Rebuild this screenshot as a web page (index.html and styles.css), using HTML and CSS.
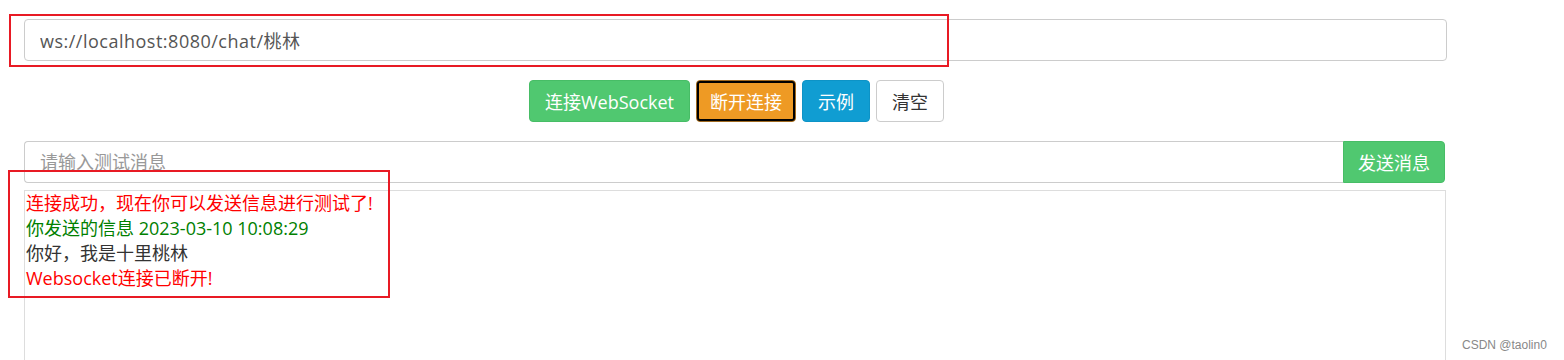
FILE: index.html
```html
<!DOCTYPE html>
<html lang="zh-CN">
<head>
  <meta charset="UTF-8" />
  <title>WebSocket 测试</title>
  <link rel="stylesheet" href="styles.css">
</head>
<body>

<div class="page">
  <div class="url-row">
    <input type="text" class="form-input url-input" id="wsUrl" value="ws://localhost:8080/chat/桃林" />
  </div>

  <div class="btn-row">
    <button class="btn btn-green">连接WebSocket</button>
    <button class="btn btn-orange">断开连接</button>
    <button class="btn btn-blue">示例</button>
    <button class="btn btn-white">清空</button>
  </div>

  <div class="send-row">
    <input type="text" class="form-input send-input" placeholder="请输入测试消息" />
    <button class="btn btn-green send-btn">发送消息</button>
  </div>

  <div class="messages">
    <div class="msg red">连接成功，现在你可以发送信息进行测试了!</div>
    <div class="msg green">你发送的信息 2023-03-10 10:08:29</div>
    <div class="msg">你好，我是十里桃林</div>
    <div class="msg red">Websocket连接已断开!</div>
  </div>
</div>

<div class="mark mark-url"></div>
<div class="mark mark-msg"></div>
<div class="watermark">CSDN @taolin0</div>

</body>
</html>
```

FILE: styles.css
```css
body { margin: 0; padding: 0; background: #fff; font-family: "Open Sans", "Noto Sans CJK SC", sans-serif; color: #333; overflow: hidden; }
.page { width: 1423px; margin-left: 24px; padding-top: 19px; }
.form-input { box-sizing: border-box; width: 100%; height: 42px; padding: 0 15px; border: 1px solid #ccc; border-radius: 4px;
              font-family: inherit; font-size: 18px; color: #555; background: #fff; outline: none; }
.form-input::placeholder { color: #999; }
.url-input { letter-spacing: 0.5px; }
.btn-row { display: flex; justify-content: center; gap: 6px; margin-top: 19px; padding-left: 2px; }
.btn { box-sizing: border-box; height: 42px; padding: 0 15px; border: 1px solid transparent; border-radius: 4px;
       font-family: inherit; font-size: 18px; color: #fff; cursor: pointer; }
.btn-green { background: #50c870; border-color: #47bd66; }
.btn-orange { padding: 0 13px; background: #ee9a24; border-color: #a06a20; outline: 2px solid #000; outline-offset: -3px; }
.btn-blue { background: #109dd2; border-color: #0d93c6; }
.btn-white { background: #fff; border-color: #ccc; color: #333; }
.send-row { display: flex; width: 1421px; margin-top: 19px; }
.send-input { flex: 1; border-radius: 4px 0 0 4px; border-right: none; }
.send-btn { width: 102px; padding: 0; border-radius: 0 4px 4px 0; }
.messages { box-sizing: border-box; width: 1422px; height: 200px; margin-top: 7px; border: 1px solid #ddd; padding: 0 1px;
            font-size: 18px; line-height: 25px; }
.msg.red { color: #f00; }
.msg.green { color: #008000; }
.mark { position: absolute; border: 2px solid #e81a24; }
.mark-url { left: 9px; top: 14px; width: 936px; height: 49px; }
.mark-msg { left: 8px; top: 170px; width: 378px; height: 124px; }
.watermark { position: absolute; left: 1462px; top: 338px; font-family: "Liberation Sans", sans-serif; font-size: 12px; color: #888; }
```
